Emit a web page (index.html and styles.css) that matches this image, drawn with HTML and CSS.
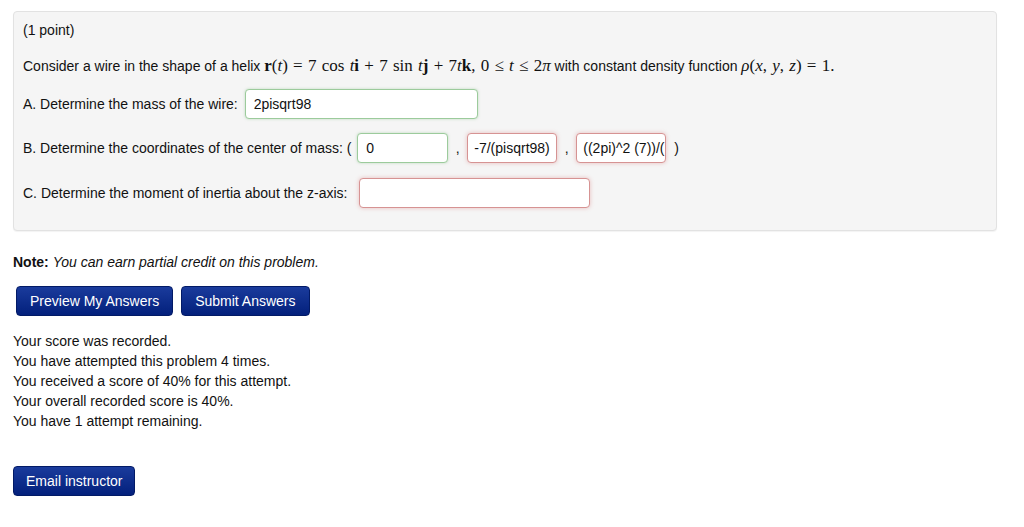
FILE: index.html
```html
<!DOCTYPE html>
<html>
<head>
<meta charset="utf-8">
<link rel="stylesheet" href="styles.css">
</head>
<body>
<div class="page">
  <div class="problem">
    <p class="points">(1 point)</p>
    <p class="stmt">Consider a wire in the shape of a helix <span class="math"><b>r</b>(<i>t</i>) = 7 cos <i>t</i><b>i</b> + 7 sin <i>t</i><b>j</b> + 7<i>t</i><b>k</b>, 0 ≤ <i>t</i> ≤ 2<i>π</i></span> with constant density function <span class="math"><i>ρ</i>(<i>x</i>, <i>y</i>, <i>z</i>) = 1.</span></p>
    <div class="row rowA">A. Determine the mass of the wire: <span class="inp ok wide">2pisqrt98</span></div>
    <div class="row rowB">B. Determine the coordinates of the center of mass: ( <span class="inp ok small first">0</span><span class="sep">,</span><span class="inp bad small">-7/(pisqrt98)</span><span class="sep">,</span><span class="inp bad small">((2pi)^2 (7))/(</span><span class="close">)</span></div>
    <div class="row rowC">C. Determine the moment of inertia about the z-axis: <span class="inp bad wideC"></span></div>
  </div>
  <p class="note"><b>Note:</b> <i>You can earn partial credit on this problem.</i></p>
  <div class="buttons">
    <span class="btn">Preview My Answers</span>
    <span class="btn">Submit Answers</span>
  </div>
  <div class="score">
    <div>Your score was recorded.</div>
    <div>You have attempted this problem 4 times.</div>
    <div>You received a score of 40% for this attempt.</div>
    <div>Your overall recorded score is 40%.</div>
    <div>You have 1 attempt remaining.</div>
  </div>
  <div class="email"><span class="btn">Email instructor</span></div>
</div>
</body>
</html>
```
FILE: styles.css
```css
html, body { margin: 0; padding: 0; background: #fff; }
body { font-family: "Liberation Sans", Arial, sans-serif; font-size: 14px; color: #111; }
.page { padding: 11px 27px 0 13px; }
.problem {
  background: #f5f5f5;
  border: 1px solid #e2e2e2;
  border-radius: 4px;
  padding: 8px 9px 22px 9px;
  box-shadow: 0 1px 1px rgba(0,0,0,0.05);
}
.points { margin: 0; line-height: 20px; height: 20px; }
.stmt { margin: 16px 0 0 0; line-height: 20px; height: 20px; white-space: nowrap; }
.math { font-family: "Liberation Serif", "Times New Roman", serif; font-size: 17px; line-height: 20px; word-spacing: 1px; }
.math b { font-weight: bold; }
.row { display: flex; align-items: center; height: 30px; white-space: pre; }
.rowA { margin-top: 13px; }
.rowB { margin-top: 14px; }
.rowC { margin-top: 15px; }
.inp {
  display: inline-block;
  box-sizing: border-box;
  height: 30px;
  line-height: 28px;
  padding: 0 8px;
  background: #fff;
  border-radius: 4px;
  font-size: 14px;
  white-space: nowrap;
  overflow: hidden;
}
.ok { border: 1px solid #9ccb9c; box-shadow: 0 0 3px rgba(90,170,90,0.35); }
.bad { border: 1px solid #d69393; box-shadow: 0 0 4px rgba(210,90,90,0.35); }
.wide { width: 233px; margin-left: 3px; }
.wideC { width: 231px; margin-left: 8px; }
.small { width: 90px; padding: 0 6px; }
.first { width: 91px; margin-left: 2px; padding: 0 8px; }
.sep { display: inline-block; width: 19px; text-align: center; }
.close { margin-left: 8px; }
.note { margin: 21px 0 0 0; line-height: 20px; }
.buttons { display: flex; gap: 8px; margin: 14px 0 0 3px; }
.btn {
  display: inline-block;
  box-sizing: border-box;
  height: 30px;
  line-height: 28px;
  padding: 0 13px;
  color: #fff;
  font-size: 14px;
  background: linear-gradient(#1a3b9c, #03207c);
  border: 1px solid #021a66;
  border-radius: 4px;
}
.score { margin-top: 15px; line-height: 20px; }
.email { margin-top: 35px; }
.email .btn { height: 30px; line-height: 28px; padding: 0 12px; }
```
